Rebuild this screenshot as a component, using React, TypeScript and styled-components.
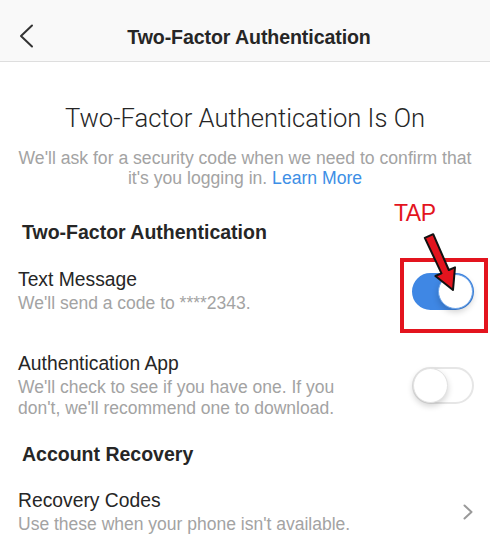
import React from 'react';
import styled, { createGlobalStyle } from 'styled-components';

const GlobalStyle = createGlobalStyle`
  html, body {
    margin: 0;
    padding: 0;
    background: #ffffff;
  }
  body {
    font-family: 'Liberation Sans', Arial, sans-serif;
    color: #262626;
  }
`;

const Page = styled.div`
  width: 490px;
  height: 545px;
  overflow: hidden;
  background: #fff;
`;

const Header = styled.header`
  height: 62px;
  box-sizing: border-box;
  padding-top: 10px;
  display: grid;
  grid-template-columns: 60px 1fr 60px;
  align-items: center;
  background: #f9f9f9;
  border-bottom: 1px solid #dedede;
`;

const BackButton = styled.button`
  border: none;
  background: transparent;
  padding: 0 0 0 18px;
  display: flex;
  align-items: center;
  height: 100%;
  cursor: pointer;
`;

const HeaderTitle = styled.h1`
  margin: 0;
  padding: 3px 0 0 8px;
  text-align: center;
  font-size: 19.6px;
  font-weight: 700;
  color: #262626;
  letter-spacing: -0.1px;
`;

const Hero = styled.section`
  padding: 41px 8px 0;
  text-align: center;
`;

const Heading = styled.h2`
  margin: 0;
  font-family: Roboto, 'Liberation Sans', sans-serif;
  font-weight: 300;
  font-size: 25.6px;
  line-height: 30px;
  color: #262626;
`;

const Description = styled.p`
  margin: 15px 0 0;
  font-size: 17.6px;
  line-height: 20px;
  color: #a3a3a3;
`;

const Link = styled.a`
  color: #3d8fe6;
  text-decoration: none;
`;

const SectionTitle = styled.h3<{ $top: number }>`
  margin: ${({ $top }) => $top}px 0 0;
  padding-left: 22px;
  font-size: 19.5px;
  font-weight: 700;
  line-height: 24px;
  color: #262626;
`;

const Row = styled.div<{ $top: number }>`
  margin-top: ${({ $top }) => $top}px;
  padding: 0 16px 0 18px;
  display: flex;
  align-items: center;
  justify-content: space-between;
`;

const RowText = styled.div`
  display: flex;
  flex-direction: column;
`;

const RowTitle = styled.div`
  font-size: 19.3px;
  line-height: 23px;
  color: #262626;
`;

const RowSub = styled.div`
  margin-top: 2px;
  font-size: 17.5px;
  line-height: 21px;
  color: #a3a3a3;
`;

const ToggleWrap = styled.div`
  position: relative;
  flex-shrink: 0;
`;

const Track = styled.div<{ $on: boolean }>`
  width: 62px;
  height: 37px;
  box-sizing: border-box;
  border-radius: 19px;
  position: relative;
  background: ${({ $on }) => ($on ? '#3f87e4' : '#ffffff')};
  border: 2px solid ${({ $on }) => ($on ? '#3f87e4' : '#e6e6e6')};
`;

const Knob = styled.div<{ $on: boolean }>`
  position: absolute;
  top: -1px;
  ${({ $on }) => ($on ? 'right: -1px;' : 'left: -1px;')}
  width: 35px;
  height: 35px;
  border-radius: 50%;
  background: #fff;
  box-sizing: border-box;
  border: ${({ $on }) => ($on ? '1.5px solid #6aa3ea' : '1px solid #e2e2e2')};
  box-shadow: 0 3px 6px rgba(0, 0, 0, 0.18);
`;

const HighlightBox = styled.div`
  position: absolute;
  left: -12px;
  top: -15px;
  width: 88px;
  height: 75px;
  box-sizing: border-box;
  border: 4.5px solid #e3141e;
  pointer-events: none;
`;

const TapLabel = styled.div`
  position: absolute;
  left: -18px;
  top: -71px;
  font-family: 'Liberation Sans', Arial, sans-serif;
  font-size: 23px;
  line-height: 22px;
  color: #e3141e;
  letter-spacing: -0.5px;
`;

const Arrow = styled.svg`
  position: absolute;
  left: 9px;
  top: -45px;
  overflow: visible;
`;

const Chevron = styled.svg`
  flex-shrink: 0;
  margin-right: 1px;
`;

const Toggle = ({ on, annotated }: { on: boolean; annotated?: boolean }) => (
  <ToggleWrap>
    <Track $on={on}>
      <Knob $on={on} />
    </Track>
    {annotated && (
      <>
        <HighlightBox />
        <TapLabel>TAP</TapLabel>
        <Arrow width="42" height="67" viewBox="0 0 42 67">
          <polygon
            points="12.2,6.2 27.8,42 34,39.3 32,62 14.4,48 20.5,45.4 3.8,9.8"
            fill="#e3141e"
            stroke="#111"
            strokeWidth="2"
            strokeLinejoin="round"
          />
        </Arrow>
      </>
    )}
  </ToggleWrap>
);

export default function App() {
  return (
    <Page>
      <GlobalStyle />
      <Header>
        <BackButton aria-label="Back">
          <svg width="16" height="24" viewBox="0 0 16 24">
            <polyline
              points="14,1.5 3,12 14,22.5"
              fill="none"
              stroke="#333"
              strokeWidth="2"
              strokeLinecap="round"
              strokeLinejoin="round"
            />
          </svg>
        </BackButton>
        <HeaderTitle>Two-Factor Authentication</HeaderTitle>
        <span />
      </Header>

      <Hero>
        <Heading>Two-Factor Authentication Is On</Heading>
        <Description>
          We'll ask for a security code when we need to confirm that
          <br />
          it's you logging in. <Link href="#">Learn More</Link>
        </Description>
      </Hero>

      <SectionTitle $top={32}>Two-Factor Authentication</SectionTitle>

      <Row $top={24}>
        <RowText>
          <RowTitle>Text Message</RowTitle>
          <RowSub>We'll send a code to ****2343.</RowSub>
        </RowText>
        <Toggle on annotated />
      </Row>

      <Row $top={38}>
        <RowText>
          <RowTitle>Authentication App</RowTitle>
          <RowSub>
            We'll check to see if you have one. If you
            <br />
            don't, we'll recommend one to download.
          </RowSub>
        </RowText>
        <Toggle on={false} />
      </Row>

      <SectionTitle $top={23}>Account Recovery</SectionTitle>

      <Row $top={23}>
        <RowText>
          <RowTitle>Recovery Codes</RowTitle>
          <RowSub>Use these when your phone isn't available.</RowSub>
        </RowText>
        <Chevron width="10" height="16" viewBox="0 0 10 16">
          <polyline
            points="1.5,1.5 8.5,8 1.5,14.5"
            fill="none"
            stroke="#9a9a9a"
            strokeWidth="2"
            strokeLinecap="round"
            strokeLinejoin="round"
          />
        </Chevron>
      </Row>
    </Page>
  );
}
